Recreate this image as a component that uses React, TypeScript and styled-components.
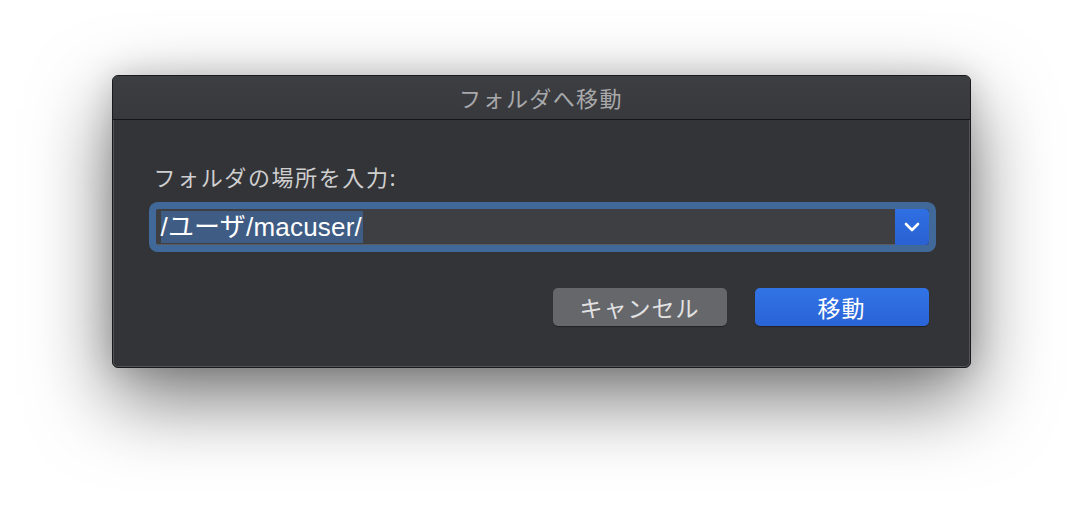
import React from 'react'
import styled, { createGlobalStyle } from 'styled-components'

const GlobalStyle = createGlobalStyle`
  html, body {
    margin: 0;
    padding: 0;
    background: #ffffff;
  }
  body {
    font-family: "Noto Sans CJK JP", "Noto Sans", sans-serif;
  }
`

const Page = styled.div`
  width: 1082px;
  height: 516px;
  display: flex;
  justify-content: center;
  align-items: flex-start;
  padding-top: 75px;
  box-sizing: border-box;
`

const Dialog = styled.div`
  width: 859px;
  height: 293px;
  box-sizing: border-box;
  display: flex;
  flex-direction: column;
  background: #333438;
  border: 1px solid #1a1a1c;
  border-radius: 6px;
  overflow: hidden;
  box-shadow:
    inset 0 0 0 1px rgba(255, 255, 255, 0.16),
    0 30px 80px rgba(0, 0, 0, 0.55),
    0 0 30px rgba(0, 0, 0, 0.15);
`

const TitleBar = styled.div`
  height: 44px;
  flex: none;
  box-sizing: border-box;
  display: flex;
  align-items: center;
  justify-content: center;
  background: linear-gradient(#3d3e42, #38393d);
  border-bottom: 1px solid #161618;
  color: #a9a9ab;
  font-size: 22px;
  letter-spacing: 1.4px;
  padding-bottom: 1px;
`

const Body = styled.div`
  flex: 1;
  display: flex;
  flex-direction: column;
  padding: 43px 41px 0 41px;
`

const Label = styled.div`
  color: #cfcfd0;
  font-size: 22px;
  line-height: 26px;
  letter-spacing: 1.6px;
`

const FieldRing = styled.div`
  margin-top: 20px;
  margin-left: 2px;
  height: 36px;
  display: flex;
  border-radius: 3px;
  box-shadow: 0 0 0 7px #40699a;
`

const Field = styled.div`
  flex: 1;
  display: flex;
  align-items: center;
  background: #3e3f43;
  border-bottom: 1px solid #5b5c60;
  border-radius: 3px 0 0 3px;
  padding-left: 5px;
`

const Selected = styled.span`
  background: #3f5d84;
  color: #ffffff;
  font-family: "Liberation Sans", "Noto Sans CJK JP", sans-serif;
  font-size: 26px;
  line-height: 32px;
  height: 32px;
  letter-spacing: 0.2px;
  padding-right: 1px;
`

const DropButton = styled.div`
  width: 34px;
  flex: none;
  display: flex;
  align-items: center;
  justify-content: center;
  background: linear-gradient(#2f6fe2, #2a61d2);
  border-radius: 0 4px 4px 0;
`

const ButtonRow = styled.div`
  display: flex;
  justify-content: flex-end;
  gap: 28px;
  margin-top: 43px;
`

const Button = styled.div<{ $primary?: boolean }>`
  width: 174px;
  height: 38px;
  box-sizing: border-box;
  display: flex;
  align-items: center;
  justify-content: center;
  border-radius: 5px;
  font-size: 23px;
  letter-spacing: 1px;
  color: ${({ $primary }) => ($primary ? '#ffffff' : '#e2e2e3')};
  background: ${({ $primary }) =>
    $primary ? 'linear-gradient(#3173e6, #2a64d6)' : '#66676b'};
  box-shadow: 0 1px 1px rgba(0, 0, 0, 0.35);
`

const Chevron = () => (
  <svg width="16" height="10" viewBox="0 0 16 10">
    <path d="M2 2 L8 8 L14 2" fill="none" stroke="#ffffff" strokeWidth="2.6" strokeLinecap="round" strokeLinejoin="round" />
  </svg>
)

const App = () => {
  return (
    <Page>
      <GlobalStyle />
      <Dialog>
        <TitleBar>フォルダへ移動</TitleBar>
        <Body>
          <Label>フォルダの場所を入力:</Label>
          <FieldRing>
            <Field>
              <Selected>/ユーザ/macuser/</Selected>
            </Field>
            <DropButton>
              <Chevron />
            </DropButton>
          </FieldRing>
          <ButtonRow>
            <Button>キャンセル</Button>
            <Button $primary>移動</Button>
          </ButtonRow>
        </Body>
      </Dialog>
    </Page>
  )
}

export default App
